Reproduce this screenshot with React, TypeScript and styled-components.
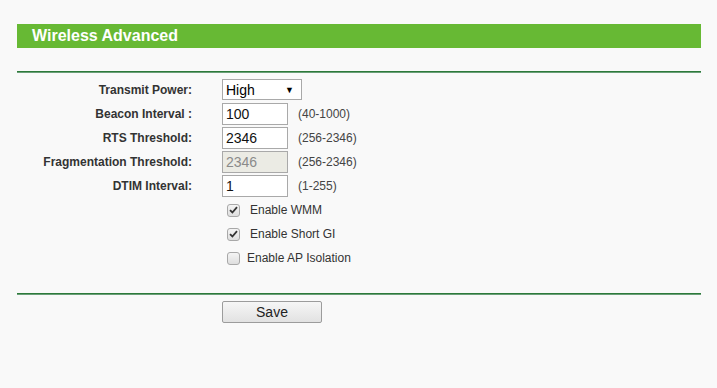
import React from 'react'
import styled, {createGlobalStyle} from 'styled-components'

const GlobalStyle = createGlobalStyle`
  html, body {
    margin: 0;
    padding: 0;
    background: #f9f9f9;
    font-family: 'Liberation Sans', Arial, sans-serif;
  }
`

const Page = styled.div`
  width: 684px;
  padding: 24px 0 0 17px;
  min-height: 364px;
`

const TitleBar = styled.div`
  height: 24px;
  background: #67b934;
  color: #fff;
  font-size: 16px;
  font-weight: bold;
  line-height: 24px;
  padding-left: 15px;
`

const Rule = styled.div<{$top: number}>`
  margin-top: ${p => p.$top}px;
  height: 1px;
  border-top: 1px solid #2d7a3a;
  background: #6a9f78;
`

const Form = styled.div`
  display: grid;
  grid-template-columns: 175px auto;
  column-gap: 30px;
  grid-auto-rows: 24px;
  padding-top: 5px;
`

const Label = styled.div`
  text-align: right;
  font-size: 12px;
  font-weight: bold;
  color: #333;
  display: flex;
  align-items: center;
  justify-content: flex-end;
`

const Cell = styled.div`
  display: flex;
  align-items: center;
  gap: 10px;
`

const TextBox = styled.div<{$disabled?: boolean}>`
  width: 61px;
  height: 20px;
  border: 1px solid #a9a9a9;
  background: ${p => (p.$disabled ? '#ebebe4' : '#fff')};
  color: ${p => (p.$disabled ? '#8a8a8a' : '#111')};
  font-size: 14px;
  line-height: 21px;
  padding-left: 3px;
`

const Select = styled.div`
  width: 75px;
  height: 19px;
  border: 1px solid #a9a9a9;
  background: #fff;
  font-size: 14px;
  line-height: 20px;
  padding-left: 3px;
  display: flex;
  justify-content: space-between;
  align-items: center;
  margin-bottom: 1px;
`

const Arrow = styled.span`
  font-size: 9px;
  margin-right: 7px;
  color: #000;
`

const Hint = styled.span`
  font-size: 12px;
  color: #444;
`

const CheckRow = styled.div`
  grid-column: 2;
  display: flex;
  align-items: center;
  padding-left: 5px;
`

const Box = styled.span`
  width: 11px;
  height: 11px;
  border: 1px solid #a8a8a8;
  border-radius: 3px;
  background: linear-gradient(#f4f4f4, #dedede);
  display: inline-flex;
  align-items: center;
  justify-content: center;
`

const CheckText = styled.span<{$gap: number}>`
  font-size: 12px;
  color: #333;
  margin-left: ${p => p.$gap}px;
`

const Actions = styled.div`
  padding: 6px 0 0 205px;
`

const SaveButton = styled.button`
  width: 100px;
  height: 22px;
  border: 1px solid #9c9c9c;
  border-radius: 2px;
  background: linear-gradient(#f6f6f6, #e2e2e2);
  font-family: 'Liberation Sans', Arial, sans-serif;
  font-size: 14px;
  color: #222;
  padding: 0;
`

const Check = () => (
  <svg width="9" height="8" viewBox="0 0 9 8">
    <path d="M1 4.2 L3.4 6.5 L8 1.2" fill="none" stroke="#333" strokeWidth="1.8" />
  </svg>
)

const fields = [
  {label: 'Beacon Interval :', value: '100', hint: '(40-1000)'},
  {label: 'RTS Threshold:', value: '2346', hint: '(256-2346)'},
  {label: 'Fragmentation Threshold:', value: '2346', hint: '(256-2346)', disabled: true},
  {label: 'DTIM Interval:', value: '1', hint: '(1-255)'},
]

const checks = [
  {text: 'Enable WMM', on: true, gap: 10},
  {text: 'Enable Short GI', on: true, gap: 10},
  {text: 'Enable AP Isolation', on: false, gap: 7},
]

export default function App() {
  return (
    <Page>
      <GlobalStyle />
      <TitleBar>Wireless Advanced</TitleBar>
      <Rule $top={23} />
      <Form>
        <Label>Transmit Power:</Label>
        <Cell>
          <Select>
            High<Arrow>▼</Arrow>
          </Select>
        </Cell>
        {fields.map(f => (
          <React.Fragment key={f.label}>
            <Label>{f.label}</Label>
            <Cell>
              <TextBox $disabled={f.disabled}>{f.value}</TextBox>
              <Hint>{f.hint}</Hint>
            </Cell>
          </React.Fragment>
        ))}
        {checks.map(c => (
          <CheckRow key={c.text}>
            <Box>{c.on && <Check />}</Box>
            <CheckText $gap={c.gap}>{c.text}</CheckText>
          </CheckRow>
        ))}
      </Form>
      <Rule $top={23} />
      <Actions>
        <SaveButton>Save</SaveButton>
      </Actions>
    </Page>
  )
}
